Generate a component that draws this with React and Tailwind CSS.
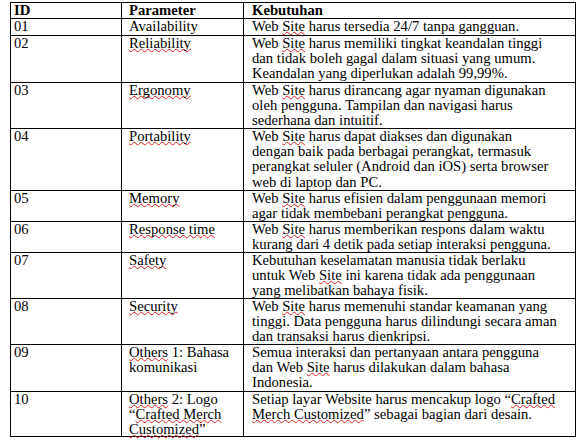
import React from "react";

const S = ({ children }) => (
  <span className="underline decoration-wavy decoration-[#e02020] decoration-1 underline-offset-[0px] [text-decoration-skip-ink:none]">
    {children}
  </span>
);

const rows = [
  {
    h: "h-[17px]",
    id: "01",
    p: <>Availability</>,
    k: [<>Web <S>Site</S> harus tersedia 24/7 tanpa gangguan.</>],
  },
  {
    h: "h-[47px]",
    id: "02",
    p: <S>Reliability</S>,
    k: [
      <>Web <S>Site</S> harus memiliki tingkat keandalan tinggi</>,
      <>dan tidak boleh gagal dalam situasi yang umum.</>,
      <>Keandalan yang diperlukan adalah 99,99%.</>,
    ],
  },
  {
    h: "h-[46px]",
    id: "03",
    p: <S>Ergonomy</S>,
    k: [
      <>Web <S>Site</S> harus dirancang agar nyaman digunakan</>,
      <>oleh pengguna. Tampilan dan navigasi harus</>,
      <>sederhana dan intuitif.</>,
    ],
  },
  {
    h: "h-[62px]",
    id: "04",
    p: <S>Portability</S>,
    k: [
      <>Web <S>Site</S> harus dapat diakses dan digunakan</>,
      <>dengan baik pada berbagai perangkat, termasuk</>,
      <>perangkat seluler (Android dan iOS) serta browser</>,
      <>web di laptop dan PC.</>,
    ],
  },
  {
    h: "h-[31px]",
    id: "05",
    p: <S>Memory</S>,
    k: [
      <>Web <S>Site</S> harus efisien dalam penggunaan memori</>,
      <>agar tidak membebani perangkat pengguna.</>,
    ],
  },
  {
    h: "h-[31px]",
    id: "06",
    p: <S>Response time</S>,
    k: [
      <>Web <S>Site</S> harus memberikan respons dalam waktu</>,
      <>kurang dari 4 detik pada setiap interaksi pengguna.</>,
    ],
  },
  {
    h: "h-[46px]",
    id: "07",
    p: <S>Safety</S>,
    k: [
      <>Kebutuhan keselamatan manusia tidak berlaku</>,
      <>untuk Web <S>Site</S> ini karena tidak ada penggunaan</>,
      <>yang melibatkan bahaya fisik.</>,
    ],
  },
  {
    h: "h-[46px]",
    id: "08",
    p: <S>Security</S>,
    k: [
      <>Web <S>Site</S> harus memenuhi standar keamanan yang</>,
      <>tinggi. Data pengguna harus dilindungi secara aman</>,
      <>dan transaksi harus dienkripsi.</>,
    ],
  },
  {
    h: "h-[47px]",
    id: "09",
    p: [<><S>Others</S> 1: Bahasa</>, <>komunikasi</>],
    k: [
      <>Semua interaksi dan pertanyaan antara pengguna</>,
      <>dan Web <S>Site</S> harus dilakukan dalam bahasa</>,
      <>Indonesia.</>,
    ],
  },
  {
    h: "h-[45px]",
    id: "10",
    p: [<><S>Others</S> 2: Logo</>, <>“<S>Crafted Merch</S></>, <><S>Customized</S>”</>],
    k: [
      <>Setiap layar Website harus mencakup logo “<S>Crafted</S></>,
      <><S>Merch Customized</S>” sebagai bagian dari desain.</>,
    ],
  },
];

const Lines = ({ items }) => {
  const arr = Array.isArray(items) ? items : [items];
  return (
    <>
      {arr.map((l, i) => (
        <div key={i} className="whitespace-nowrap">
          {l}
        </div>
      ))}
    </>
  );
};

export default function App() {
  return (
    <div
      className="w-[588px] h-[442px] bg-white text-black overflow-hidden pt-[2px] pl-[10px]"
      style={{ fontFamily: '"Liberation Serif", "Times New Roman", serif' }}
    >
      <div className="w-[566px] border-t border-l border-black text-[14.67px] leading-[15.2px]">
        <div className="flex h-[16px] border-b border-black font-bold">
          <div className="w-[111px] border-r border-black pl-[3px]">ID</div>
          <div className="w-[122px] border-r border-black pl-[7px]">Parameter</div>
          <div className="w-[332px] border-r border-black pl-[8px]">Kebutuhan</div>
        </div>
        {rows.map((r) => (
          <div key={r.id} className={`flex ${r.h} border-b border-black`}>
            <div className="w-[111px] border-r border-black pl-[3px]">{r.id}</div>
            <div className="w-[122px] border-r border-black pl-[7px]">
              <Lines items={r.p} />
            </div>
            <div className="w-[332px] border-r border-black pl-[8px]">
              <Lines items={r.k} />
            </div>
          </div>
        ))}
      </div>
    </div>
  );
}
